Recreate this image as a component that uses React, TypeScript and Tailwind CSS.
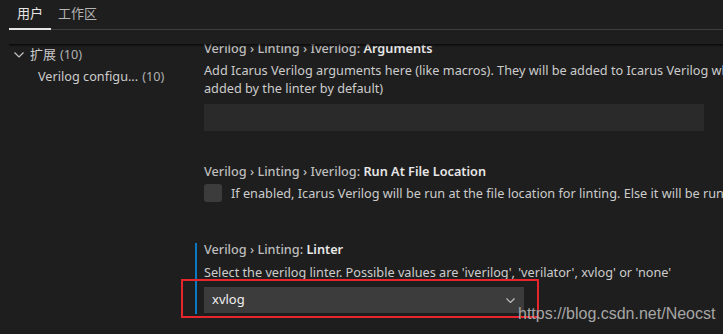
export default function App() {
  return (
    <div
      className="relative w-[723px] h-[334px] overflow-hidden bg-[#1e1e1e] text-[12.7px] text-[#cccccc]"
      style={{ fontFamily: '"Noto Sans", "Noto Sans CJK SC", sans-serif' }}
    >
      {/* tabs */}
      <div className="ml-[9px] flex h-[30px] border-b border-[#3f3f3f] text-[13px]">
        <div className="-mb-px border-b-2 border-[#e7e7e7] px-[8px] pt-[4px] leading-[18px] text-[#e7e7e7]">用户</div>
        <div className="px-[7px] pt-[4px] leading-[18px] text-[#b4b4b4]">工作区</div>
      </div>

      <div className="h-[14px]" />

      {/* body */}
      <div className="relative flex h-[290px] overflow-hidden">
        <div className="pointer-events-none absolute left-[9px] right-0 top-0 h-[3px] bg-gradient-to-b from-black/70 to-transparent" />

        {/* tree */}
        <div className="ml-[9px] w-[186px] shrink-0">
          <div className="flex h-[22px] items-center">
            <svg className="ml-[5px] mr-[6px]" width="10" height="6" viewBox="0 0 10 6">
              <polyline points="0.5,0.5 5,5 9.5,0.5" fill="none" stroke="#c5c5c5" strokeWidth="1.2" />
            </svg>
            <span className="text-[13px] text-[#cccccc]">扩展</span>
            <span className="ml-[4px] text-[#b0b0b0]">(10)</span>
          </div>
          <div className="flex h-[22px] items-center pl-[29px]">
            <span>Verilog configu...</span>
            <span className="ml-[4px] text-[#b0b0b0]">(10)</span>
          </div>
        </div>

        {/* settings */}
        <div className="flex-1 min-w-0">
          <div className="-mt-[5px] border-l-2 border-transparent pl-[7px]">
            <div className="leading-[18px] whitespace-nowrap">
              <span className="font-medium text-[#bdbdbd]">Verilog › Linting › Iverilog: </span>
              <span className="font-semibold text-[#e7e7e7]">Arguments</span>
            </div>
            <div className="mt-[4px] leading-[18px] whitespace-nowrap">
              <div>Add Icarus Verilog arguments here (like macros). They will be added to Icarus Verilog while linting (The command "-t null" will be</div>
              <div>added by the linter by default)</div>
            </div>
            <div className="mt-[7px] h-[27px] w-[500px] bg-[#2a2a2a]" />
          </div>

          <div className="mt-[31px] border-l-2 border-transparent pl-[7px]">
            <div className="leading-[18px] whitespace-nowrap">
              <span className="font-medium text-[#bdbdbd]">Verilog › Linting › Iverilog: </span>
              <span className="font-semibold text-[#e7e7e7]">Run At File Location</span>
            </div>
            <div className="mt-[4px] flex h-[18px] items-center whitespace-nowrap">
              <div className="h-[18px] w-[18px] shrink-0 rounded-[3px] bg-[#3c3c3c]" />
              <span className="ml-[9px] leading-[18px]">If enabled, Icarus Verilog will be run at the file location for linting. Else it will be run at the workspace folder.</span>
            </div>
          </div>

          <div className="mt-[41px] border-l-2 border-[#0a78c2] pb-[1px] pl-[7px]">
            <div className="leading-[12px] whitespace-nowrap">
              <span className="font-medium text-[#bdbdbd]">Verilog › Linting: </span>
              <span className="font-semibold text-[#e7e7e7]">Linter</span>
            </div>
            <div className="mt-[8px] leading-[18px] whitespace-nowrap">
              Select the verilog linter. Possible values are 'iverilog', 'verilator', xvlog' or 'none'
            </div>
            <div className="mt-[6px] flex h-[26px] w-[320px] items-center justify-between bg-[#3c3c3c] pl-[8px] pr-[9px]">
              <span className="text-[13px] text-[#f0f0f0]">xvlog</span>
              <svg width="9" height="5" viewBox="0 0 9 5">
                <polyline points="0.5,0.5 4.5,4.5 8.5,0.5" fill="none" stroke="#c5c5c5" strokeWidth="1.1" />
              </svg>
            </div>
          </div>
        </div>
      </div>

      {/* annotation */}
      <div className="absolute left-[181px] top-[279px] h-[39px] w-[358px] border-2 border-[#e8242c]" />
      <div
        className="absolute left-[518px] top-[306px] text-[16px] leading-[16px] text-[#a6a6a6]"
        style={{ fontFamily: '"Liberation Sans", Arial, sans-serif' }}
      >
        https://blog.csdn.net/Neocst
      </div>
    </div>
  );
}
